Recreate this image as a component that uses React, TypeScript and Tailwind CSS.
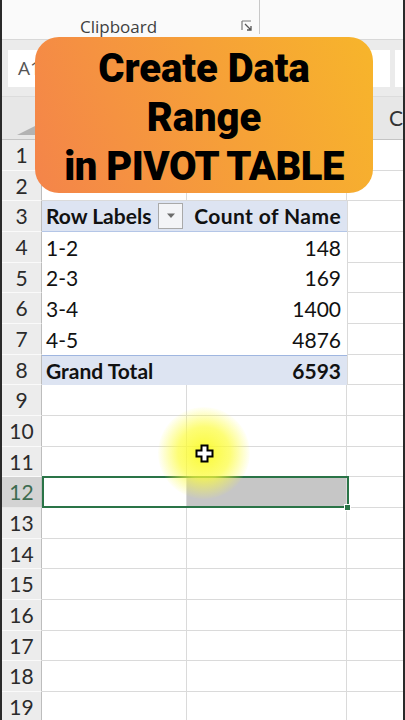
import React from 'react';

const ROWS = Array.from({ length: 19 }, (_, i) => i + 1);

const cellFont = { fontFamily: 'Lato, "Open Sans", sans-serif' };

function PivotCells({ row }: { row: number }) {
  const data: Record<number, [string, string]> = {
    4: ['1-2', '148'],
    5: ['2-3', '169'],
    6: ['3-4', '1400'],
    7: ['4-5', '4876'],
  };

  if (row === 3) {
    return (
      <div className="flex w-[305px] h-full items-center bg-[#dde4f2] border-b border-[#b4c6e7] text-[21px] font-bold text-[#111]">
        <div className="w-[145px] flex items-center pl-[4px] gap-[7px]">
          <span>Row Labels</span>
          <span className="w-[25px] h-[26px] border border-[#a9a9a9] bg-[#f3f4f7] flex items-center justify-center">
            <svg width="10" height="6" viewBox="0 0 10 6">
              <path d="M1 0.5h8L5 5z" fill="#6b6b6b" />
            </svg>
          </span>
        </div>
        <div className="w-[160px] text-right pr-[6px] tracking-[0.4px]">Count of Name</div>
      </div>
    );
  }
  if (row === 8) {
    return (
      <div className="flex w-[305px] h-full items-center bg-[#dde4f2] border-t border-[#9fb6e0] text-[21px] font-bold text-[#111]">
        <div className="w-[145px] pl-[4px]">Grand Total</div>
        <div className="w-[160px] text-right pr-[6px]">6593</div>
      </div>
    );
  }
  const [label, count] = data[row];
  return (
    <div className="flex w-[305px] h-full items-center bg-white text-[21px] text-[#111]">
      <div className="w-[145px] pl-[4px]">{label}</div>
      <div className="w-[160px] text-right pr-[6px]">{count}</div>
    </div>
  );
}

function GridRow({ row }: { row: number }) {
  const isPivot = row >= 3 && row <= 8;
  const isActive = row === 12;
  return (
    <div className="flex h-[30.67px]" style={cellFont}>
      <div
        className={`w-[40px] shrink-0 flex items-center justify-center text-[21px] border-r border-b ${
          isActive
            ? 'bg-[#d3d3d3] text-[#3d6b50] border-r-[#c0c0c0] border-b-[#e8e8e8]'
            : 'bg-[#ececec] text-[#2b2b2b] border-r-[#bdbdbd] border-b-[#fafafa]'
        }`}
      >
        {row}
      </div>
      {isPivot ? (
        <PivotCells row={row} />
      ) : (
        <>
          <div className="w-[145px] border-r border-b border-[#dadada]" />
          <div className={`w-[160px] border-r border-b border-[#dadada] ${isActive ? 'bg-[#c6c6c6]' : ''}`} />
        </>
      )}
      <div className={`flex-1 border-b border-[#dadada] ${isPivot ? 'border-l border-l-[#dadada]' : ''}`} />
    </div>
  );
}

export default function App() {
  return (
    <div className="relative w-[405px] h-[720px] overflow-hidden bg-white border-x-2 border-[#2a2a2a]">
      {/* ribbon */}
      <div className="h-[40px] flex bg-[#fafafa] border-b border-[#d8d8d8]" style={{ fontFamily: '"Open Sans", "Noto Sans", sans-serif' }}>
        <div className="w-[258px] h-[34px] flex items-end justify-between pl-[78px] pr-[5px] pb-0 border-r border-[#c8c8c8]">
          <span className="text-[17px] text-[#404040] leading-none mb-[-1px]">Clipboard</span>
          <svg width="13" height="13" viewBox="0 0 13 13" className="mb-[1px]">
            <path d="M1 1h9M1 1v9" stroke="#7a7a7a" strokeWidth="1.2" fill="none" />
            <path d="M4 4l6 6M10 6v4H6" stroke="#555" strokeWidth="1.3" fill="none" />
          </svg>
        </div>
      </div>

      {/* formula bar */}
      <div className="h-[56px] flex items-center bg-[#ebebeb] gap-[5px]" style={{ fontFamily: '"Open Sans", "Noto Sans", sans-serif' }}>
        <div className="ml-[6px] w-[60px] h-[37px] bg-white flex items-center pl-[10px] text-[19px] text-[#555]">A1</div>
        <div className="flex-1" />
        <div className="w-[30px] h-[37px] bg-white" />
        <div className="w-[8px] h-[37px] bg-white" />
      </div>

      {/* column header */}
      <div className="h-[44px] flex bg-[#e7e7e7] border-b border-[#c4c4c4] border-t border-t-[#dcdcdc]" style={cellFont}>
        <div className="w-[40px] flex items-end justify-end pb-[4px] pr-[2px] border-r border-[#c8c8c8]">
          <svg width="22" height="11" viewBox="0 0 22 11">
            <path d="M22 0V11H0z" fill="#b3b3b3" />
          </svg>
        </div>
        <div className="w-[145px]" />
        <div className="w-[160px] border-r border-[#c8c8c8]" />
        <div className="flex-1 flex items-center pl-[44px] text-[21px] text-[#333]">C</div>
      </div>

      {/* grid */}
      <div>
        {ROWS.map((r) => (
          <GridRow key={r} row={r} />
        ))}
      </div>

      {/* selection border A12:B12 */}
      <div className="absolute left-[40px] top-[476px] w-[307px] h-[32px] border-2 border-[#2a7447]" />
      <div className="absolute left-[342px] top-[504px] w-[7px] h-[7px] bg-[#2a7447] border border-white" />

      {/* cursor highlight */}
      <div className="absolute left-[156px] top-[407px] w-[92px] h-[92px] rounded-full bg-[radial-gradient(circle,rgba(250,250,30,0.9)_0%,rgba(252,252,60,0.7)_40%,rgba(255,255,120,0)_72%)]" />
      <svg className="absolute left-[193px] top-[444px]" width="19" height="19" viewBox="0 0 19 19">
        <path
          d="M6.5 1.5h6v5h5v6h-5v5h-6v-5h-5v-6h5z"
          fill="white"
          stroke="black"
          strokeWidth="2"
          strokeLinejoin="miter"
        />
      </svg>

      {/* title banner */}
      <div
        className="absolute left-[33px] top-[37px] w-[338px] h-[156px] rounded-[24px] bg-[linear-gradient(70deg,#f4844a_0%,#f6a038_55%,#f7b52b_100%)] flex flex-col items-center justify-center text-black font-black leading-[49px] text-[40px] pt-[4px]"
        style={{ fontFamily: 'Roboto, "Noto Sans", sans-serif' }}
      >
        <span>Create Data</span>
        <span>Range</span>
        <span className="tracking-[-0.5px]">in PIVOT TABLE</span>
      </div>
    </div>
  );
}
